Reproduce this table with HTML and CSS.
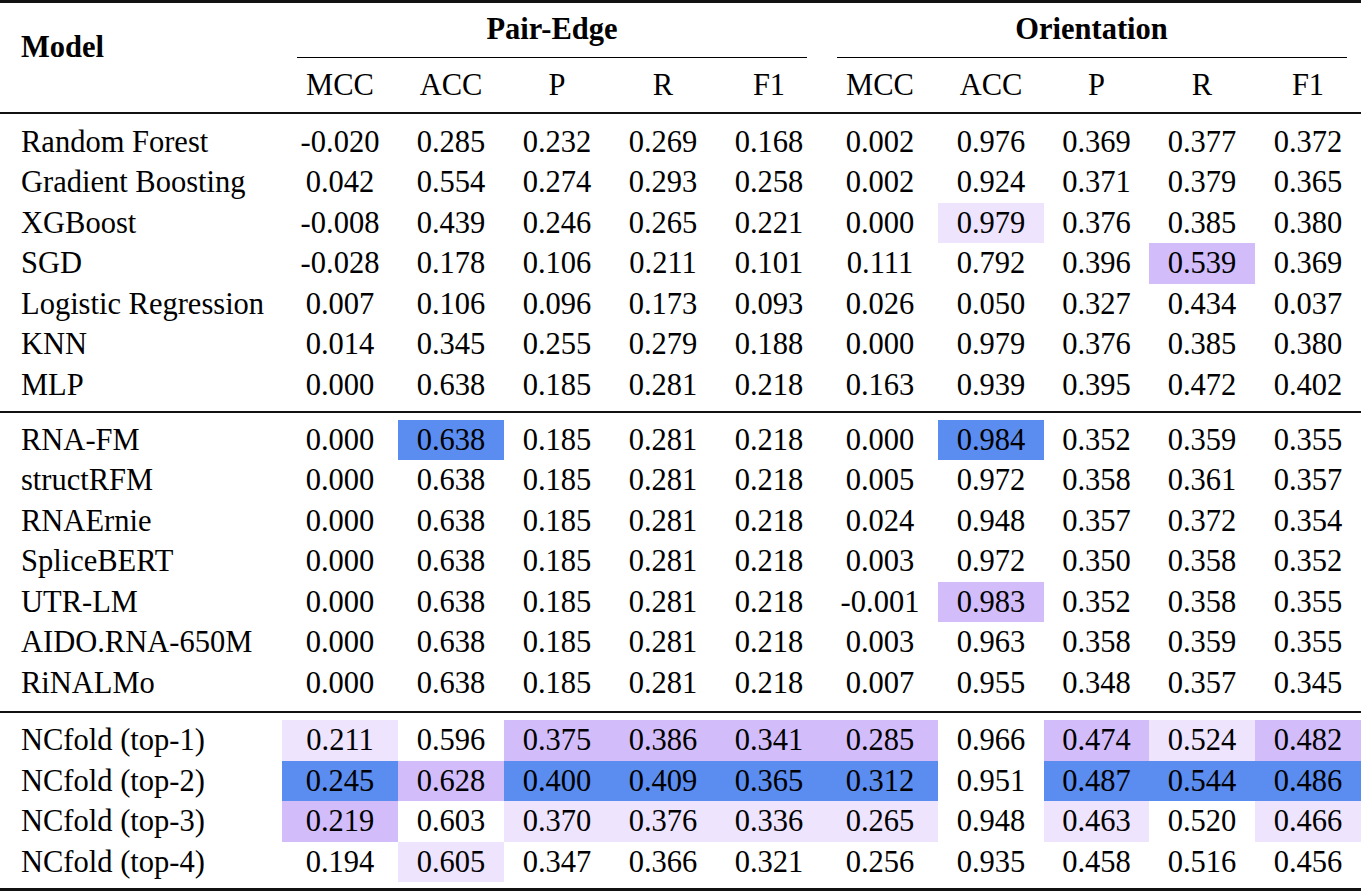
FILE: index.html
```html
<!DOCTYPE html>
<html>
<head>
<meta charset="utf-8">
<link rel="stylesheet" href="styles.css">
</head>
<body>
<div class="table">
  <div class="rule heavy"></div>
  <div class="head">
    <div class="model-h">Model</div>
    <div class="group-h pe">Pair-Edge</div>
    <div class="group-h or">Orientation</div>
    <div class="cmid pe-line"></div>
    <div class="cmid or-line"></div>
    <div class="sub c2">MCC</div>
    <div class="sub">ACC</div>
    <div class="sub">P</div>
    <div class="sub">R</div>
    <div class="sub">F1</div>
    <div class="sub">MCC</div>
    <div class="sub">ACC</div>
    <div class="sub">P</div>
    <div class="sub">R</div>
    <div class="sub">F1</div>
  </div>
  <div class="rule mid"></div>
  <div class="group g1">
    <div class="name">Random Forest</div><div>-0.020</div><div>0.285</div><div>0.232</div><div>0.269</div><div>0.168</div><div>0.002</div><div>0.976</div><div>0.369</div><div>0.377</div><div>0.372</div>
    <div class="name">Gradient Boosting</div><div>0.042</div><div>0.554</div><div>0.274</div><div>0.293</div><div>0.258</div><div>0.002</div><div>0.924</div><div>0.371</div><div>0.379</div><div>0.365</div>
    <div class="name">XGBoost</div><div>-0.008</div><div>0.439</div><div>0.246</div><div>0.265</div><div>0.221</div><div>0.000</div><div class="light">0.979</div><div>0.376</div><div>0.385</div><div>0.380</div>
    <div class="name">SGD</div><div>-0.028</div><div>0.178</div><div>0.106</div><div>0.211</div><div>0.101</div><div>0.111</div><div>0.792</div><div>0.396</div><div class="mid-p">0.539</div><div>0.369</div>
    <div class="name">Logistic Regression</div><div>0.007</div><div>0.106</div><div>0.096</div><div>0.173</div><div>0.093</div><div>0.026</div><div>0.050</div><div>0.327</div><div>0.434</div><div>0.037</div>
    <div class="name">KNN</div><div>0.014</div><div>0.345</div><div>0.255</div><div>0.279</div><div>0.188</div><div>0.000</div><div>0.979</div><div>0.376</div><div>0.385</div><div>0.380</div>
    <div class="name">MLP</div><div>0.000</div><div>0.638</div><div>0.185</div><div>0.281</div><div>0.218</div><div>0.163</div><div>0.939</div><div>0.395</div><div>0.472</div><div>0.402</div>
  </div>
  <div class="rule thin"></div>
  <div class="group g2">
    <div class="name">RNA-FM</div><div>0.000</div><div class="blue">0.638</div><div>0.185</div><div>0.281</div><div>0.218</div><div>0.000</div><div class="blue">0.984</div><div>0.352</div><div>0.359</div><div>0.355</div>
    <div class="name">structRFM</div><div>0.000</div><div>0.638</div><div>0.185</div><div>0.281</div><div>0.218</div><div>0.005</div><div>0.972</div><div>0.358</div><div>0.361</div><div>0.357</div>
    <div class="name">RNAErnie</div><div>0.000</div><div>0.638</div><div>0.185</div><div>0.281</div><div>0.218</div><div>0.024</div><div>0.948</div><div>0.357</div><div>0.372</div><div>0.354</div>
    <div class="name">SpliceBERT</div><div>0.000</div><div>0.638</div><div>0.185</div><div>0.281</div><div>0.218</div><div>0.003</div><div>0.972</div><div>0.350</div><div>0.358</div><div>0.352</div>
    <div class="name">UTR-LM</div><div>0.000</div><div>0.638</div><div>0.185</div><div>0.281</div><div>0.218</div><div>-0.001</div><div class="mid-p">0.983</div><div>0.352</div><div>0.358</div><div>0.355</div>
    <div class="name">AIDO.RNA-650M</div><div>0.000</div><div>0.638</div><div>0.185</div><div>0.281</div><div>0.218</div><div>0.003</div><div>0.963</div><div>0.358</div><div>0.359</div><div>0.355</div>
    <div class="name">RiNALMo</div><div>0.000</div><div>0.638</div><div>0.185</div><div>0.281</div><div>0.218</div><div>0.007</div><div>0.955</div><div>0.348</div><div>0.357</div><div>0.345</div>
  </div>
  <div class="rule thin"></div>
  <div class="group g3">
    <div class="name">NCfold (top-1)</div><div class="light">0.211</div><div>0.596</div><div class="mid-p">0.375</div><div class="mid-p">0.386</div><div class="mid-p">0.341</div><div class="mid-p">0.285</div><div>0.966</div><div class="mid-p">0.474</div><div class="light">0.524</div><div class="mid-p">0.482</div>
    <div class="name">NCfold (top-2)</div><div class="blue">0.245</div><div class="mid-p">0.628</div><div class="blue">0.400</div><div class="blue">0.409</div><div class="blue">0.365</div><div class="blue">0.312</div><div>0.951</div><div class="blue">0.487</div><div class="blue">0.544</div><div class="blue">0.486</div>
    <div class="name">NCfold (top-3)</div><div class="mid-p">0.219</div><div>0.603</div><div class="light">0.370</div><div class="light">0.376</div><div class="light">0.336</div><div class="light">0.265</div><div>0.948</div><div class="light">0.463</div><div>0.520</div><div class="light">0.466</div>
    <div class="name">NCfold (top-4)</div><div>0.194</div><div class="light">0.605</div><div>0.347</div><div>0.366</div><div>0.321</div><div>0.256</div><div>0.935</div><div>0.458</div><div>0.516</div><div>0.456</div>
  </div>
  <div class="rule heavy"></div>
</div>
</body>
</html>
```

FILE: styles.css
```css
html, body {
  margin: 0;
  padding: 0;
  background: #ffffff;
}

body {
  font-family: "Liberation Serif", "Times New Roman", serif;
  font-size: 30.5px;
  color: #000000;
}

.table {
  width: 1361px;
}

.rule {
  background: #111111;
}

.rule.heavy {
  height: 3px;
}

.rule.mid {
  height: 2px;
}

.rule.thin {
  height: 1.5px;
}

.head,
.group {
  display: grid;
  grid-template-columns: 282px 116px 106px 106px 106px 106px 116px 106px 105px 106px 106px;
}

.head {
  grid-template-rows: 54px 1px 54px;
}

.model-h {
  grid-column: 1;
  grid-row: 1 / 4;
  font-weight: bold;
  padding: 24px 0 0 21px;
  line-height: 40px;
}

.group-h {
  grid-row: 1;
  font-weight: bold;
  text-align: center;
  line-height: 52px;
}

.group-h.pe {
  grid-column: 2 / 7;
}

.group-h.or {
  grid-column: 7 / 12;
}

.cmid {
  grid-row: 2;
  background: #000000;
}

.pe-line {
  grid-column: 2 / 7;
  margin: 0 15px;
}

.or-line {
  grid-column: 7 / 12;
  margin: 0 14px 0 15px;
}

.sub {
  grid-row: 3;
  text-align: center;
  line-height: 54px;
}

.sub.c2 {
  grid-column: 2;
}

.group {
  grid-auto-rows: 40.5px;
}

.group > div {
  text-align: center;
  line-height: 40.5px;
  white-space: nowrap;
}

.group > .name {
  text-align: left;
  padding-left: 21px;
}

.g1 {
  padding: 7.5px 0 6px;
}

.g2 {
  padding: 7px 0 8px;
}

.g3 {
  padding: 7.5px 0 6px;
}

.blue {
  background: #5b8cef;
}

.mid-p {
  background: #d2bdfa;
}

.light {
  background: #eee4fe;
}
```
